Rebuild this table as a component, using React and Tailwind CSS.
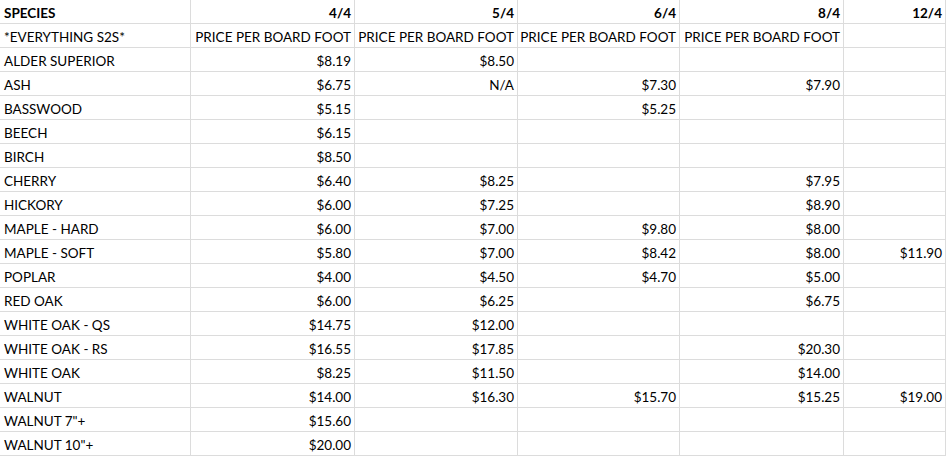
const cols = ["4/4", "5/4", "6/4", "8/4", "12/4"];

const rows = [
  ["ALDER SUPERIOR", "$8.19", "$8.50", "", "", ""],
  ["ASH", "$6.75", "N/A", "$7.30", "$7.90", ""],
  ["BASSWOOD", "$5.15", "", "$5.25", "", ""],
  ["BEECH", "$6.15", "", "", "", ""],
  ["BIRCH", "$8.50", "", "", "", ""],
  ["CHERRY", "$6.40", "$8.25", "", "$7.95", ""],
  ["HICKORY", "$6.00", "$7.25", "", "$8.90", ""],
  ["MAPLE - HARD", "$6.00", "$7.00", "$9.80", "$8.00", ""],
  ["MAPLE - SOFT", "$5.80", "$7.00", "$8.42", "$8.00", "$11.90"],
  ["POPLAR", "$4.00", "$4.50", "$4.70", "$5.00", ""],
  ["RED OAK", "$6.00", "$6.25", "", "$6.75", ""],
  ["WHITE OAK - QS", "$14.75", "$12.00", "", "", ""],
  ["WHITE OAK - RS", "$16.55", "$17.85", "", "$20.30", ""],
  ["WHITE OAK", "$8.25", "$11.50", "", "$14.00", ""],
  ["WALNUT", "$14.00", "$16.30", "$15.70", "$15.25", "$19.00"],
  ['WALNUT 7"+', "$15.60", "", "", "", ""],
  ['WALNUT 10"+', "$20.00", "", "", "", ""],
];

function Cell({ children, right, bold }) {
  return (
    <div
      className={
        "h-6 border-r border-b border-[#dcdcdc] flex items-center pt-[4px] px-[4px] whitespace-nowrap overflow-hidden " +
        (right ? "justify-end pr-[3px] " : "") +
        (bold ? "font-bold" : "")
      }
    >
      {children}
    </div>
  );
}

export default function App() {
  return (
    <div
      className="w-[947px] h-[456px] overflow-hidden bg-white text-black text-[13.5px]"
      style={{ fontFamily: "Lato, 'Noto Sans', sans-serif" }}
    >
      <div className="grid grid-cols-[191px_164px_163px_162px_164px_102px] w-[946px]">
        <Cell bold>SPECIES</Cell>
        {cols.map((c) => (
          <Cell key={c} right bold>
            {c}
          </Cell>
        ))}

        <Cell>*EVERYTHING S2S*</Cell>
        {cols.map((c, i) => (
          <Cell key={c} right>
            {i < 4 ? "PRICE PER BOARD FOOT" : ""}
          </Cell>
        ))}

        {rows.map((r) =>
          r.map((v, i) => (
            <Cell key={r[0] + i} right={i > 0}>
              {v}
            </Cell>
          ))
        )}
      </div>
    </div>
  );
}
